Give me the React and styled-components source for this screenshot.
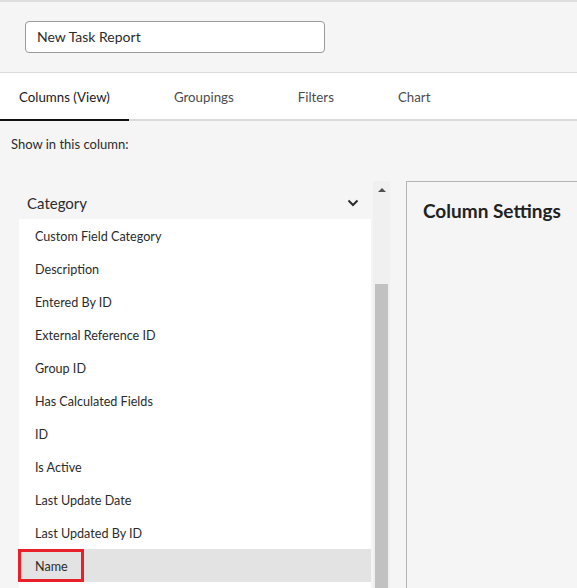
import React from 'react'
import styled, {createGlobalStyle} from 'styled-components'

const GlobalStyle = createGlobalStyle`
  body {
    margin: 0;
    background: #f5f5f5;
    font-family: Lato, "Open Sans", sans-serif;
    color: #2c2c2c;
  }
`

const Page = styled.div`
  height: 588px;
  overflow: hidden;
  border-top: 2px solid #dedede;
  box-sizing: border-box;
`

const Header = styled.div`
  height: 71px;
  box-sizing: border-box;
  padding: 19px 0 0 25px;
  border-bottom: 1px solid #dadada;
`

const NameInput = styled.input`
  width: 300px;
  height: 32px;
  box-sizing: border-box;
  border: 1px solid #9a9a9a;
  border-radius: 4px;
  padding: 0 11px 1px;
  font-family: inherit;
  font-size: 14px;
  color: #2c2c2c;
  background: #fff;
  outline: none;
`

const TabBar = styled.div`
  display: flex;
  gap: 26px;
  height: 48px;
  box-sizing: border-box;
  background: #fff;
  border-bottom: 2px solid #dadada;
`

const Tab = styled.div`
  display: flex;
  align-items: center;
  padding: 2px 19px 0;
  margin-bottom: -2px;
  font-size: 13.3px;
  color: ${p => (p.$active ? '#1a1a1a' : '#4b4b4b')};
  border-bottom: 2px solid ${p => (p.$active ? '#111' : 'transparent')};
`

const Body = styled.div`
  padding: 15px 0 0 11px;
`

const Label = styled.div`
  font-size: 13px;
  line-height: 16px;
  color: #2c2c2c;
`

const Main = styled.div`
  display: flex;
  margin-top: 29px;
`

const Picker = styled.div`
  width: 352px;
  margin-left: 8px;
`

const SelectHead = styled.div`
  display: flex;
  align-items: center;
  justify-content: space-between;
  height: 38px;
  box-sizing: border-box;
  padding: 5px 12px 0 8px;
  font-size: 15px;
  color: #2c2c2c;
`

const List = styled.div`
  background: #fff;
  padding-bottom: 40px;
`

const Item = styled.div`
  height: 33px;
  box-sizing: border-box;
  display: flex;
  align-items: center;
  padding: 2px 0 0 16px;
  font-size: 12.6px;
  background: ${p => (p.$selected ? '#e3e3e3' : '#fff')};
`

const Marked = styled.span`
  display: flex;
  align-items: center;
  height: 33px;
  box-sizing: border-box;
  margin: -2px 0 0 -17px;
  padding: 2px 0 0 14px;
  width: 66px;
  border: 3px solid #e8202a;
`

const Scrollbar = styled.div`
  width: 17px;
  margin-left: 2px;
  background: #f0f0f0;
  display: flex;
  flex-direction: column;
  align-items: center;
`

const ArrowUp = styled.div`
  margin-top: 7px;
  width: 0;
  height: 0;
  border-left: 4px solid transparent;
  border-right: 4px solid transparent;
  border-bottom: 4px solid #505050;
`

const Thumb = styled.div`
  width: 13px;
  height: 400px;
  margin-top: 92px;
  background: #c1c1c1;
`

const Settings = styled.div`
  flex: 1;
  margin-left: 16px;
  border-left: 1px solid #b4b4b4;
  border-top: 1px solid #b4b4b4;
  padding: 15px 16px 0;
  height: 420px;
`

const Title = styled.h2`
  margin: 0;
  font-size: 19px;
  font-weight: 700;
  line-height: 28px;
  color: #222;
`

const Chevron = () => (
  <svg width="12" height="8" viewBox="0 0 12 8">
    <path d="M1.5 1.5 L6 6 L10.5 1.5" fill="none" stroke="#2c2c2c" strokeWidth="2" />
  </svg>
)

const fields = [
  'Custom Field Category',
  'Description',
  'Entered By ID',
  'External Reference ID',
  'Group ID',
  'Has Calculated Fields',
  'ID',
  'Is Active',
  'Last Update Date',
  'Last Updated By ID',
  'Name',
]

export default function App() {
  return (
    <Page>
      <GlobalStyle />
      <Header>
        <NameInput defaultValue="New Task Report" />
      </Header>
      <TabBar>
        <Tab $active>Columns (View)</Tab>
        <Tab>Groupings</Tab>
        <Tab>Filters</Tab>
        <Tab>Chart</Tab>
      </TabBar>
      <Body>
        <Label>Show in this column:</Label>
        <Main>
          <Picker>
            <SelectHead>
              Category
              <Chevron />
            </SelectHead>
            <List>
              {fields.map(f =>
                f === 'Name' ? (
                  <Item key={f} $selected>
                    <Marked>{f}</Marked>
                  </Item>
                ) : (
                  <Item key={f}>{f}</Item>
                )
              )}
            </List>
          </Picker>
          <Scrollbar>
            <ArrowUp />
            <Thumb />
          </Scrollbar>
          <Settings>
            <Title>Column Settings</Title>
          </Settings>
        </Main>
      </Body>
    </Page>
  )
}
